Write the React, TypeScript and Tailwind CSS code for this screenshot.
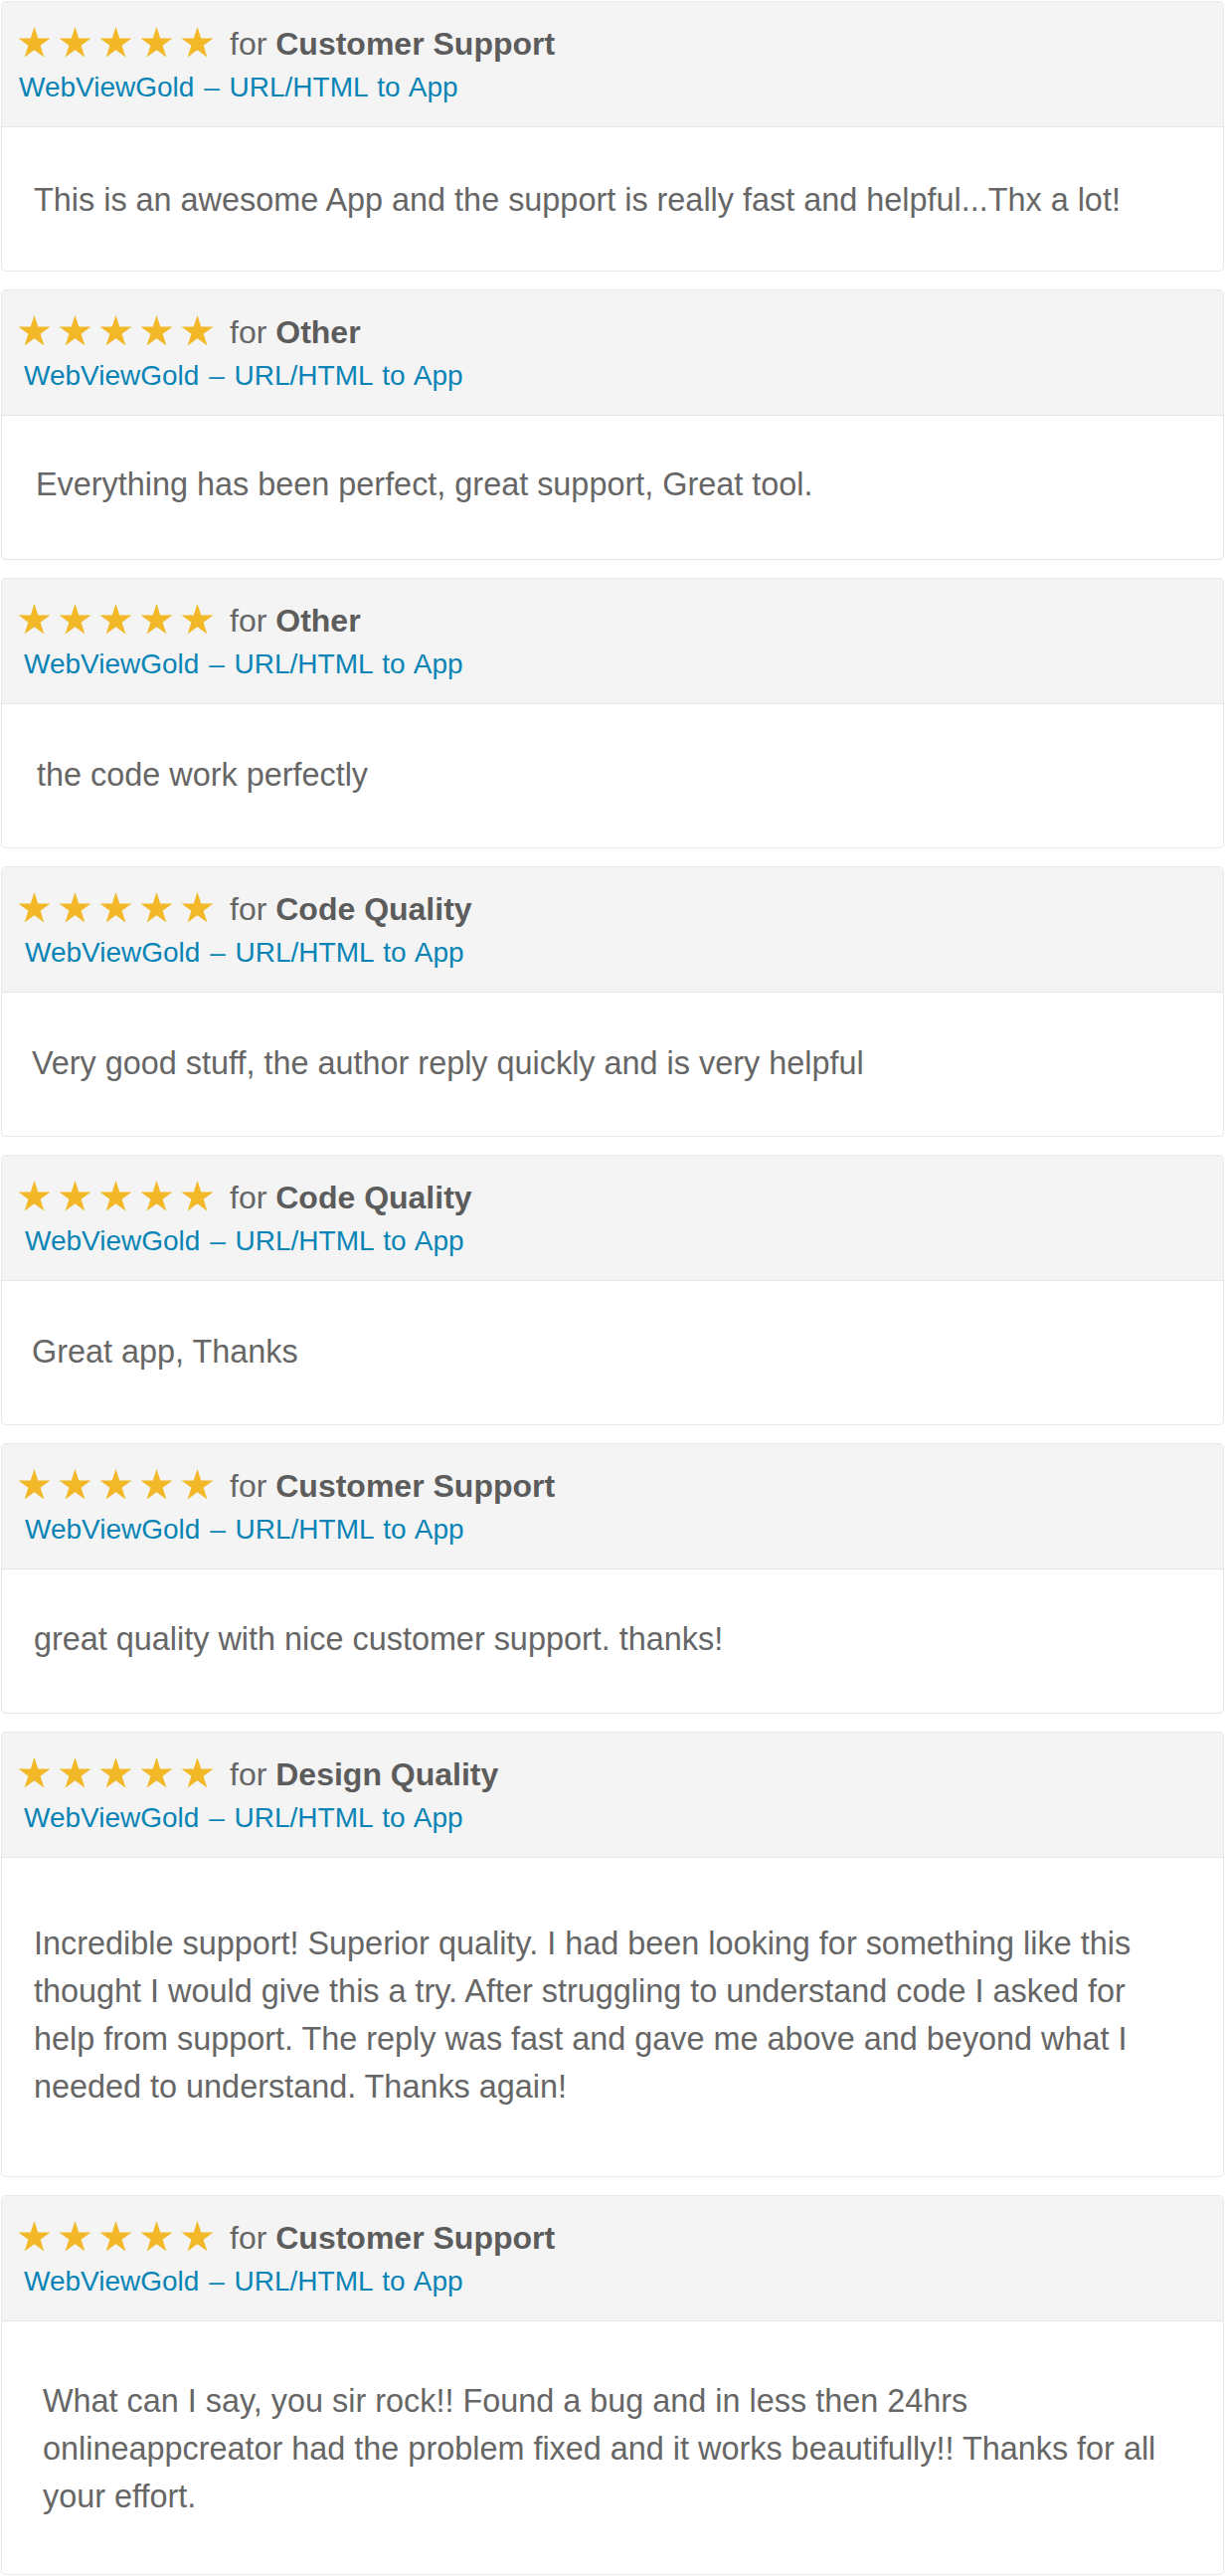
import React from 'react';

interface Review {
  category: string;
  text: string;
  linkClass: string;
  bodyClass: string;
}

const reviews: Review[] = [
  {
    category: 'Customer Support',
    text: 'This is an awesome App and the support is really fast and helpful...Thx a lot!',
    linkClass: 'ml-[1px]',
    bodyClass: 'pl-[32px] pt-[49px] pb-[47px]',
  },
  {
    category: 'Other',
    text: 'Everything has been perfect, great support, Great tool.',
    linkClass: 'ml-[6px]',
    bodyClass: 'pl-[34px] pt-[45px] pb-[51px]',
  },
  {
    category: 'Other',
    text: 'the code work perfectly',
    linkClass: 'ml-[6px]',
    bodyClass: 'pl-[35px] pt-[47px] pb-[49px]',
  },
  {
    category: 'Code Quality',
    text: 'Very good stuff, the author reply quickly and is very helpful',
    linkClass: 'ml-[7px]',
    bodyClass: 'pl-[30px] pt-[47px] pb-[49px]',
  },
  {
    category: 'Code Quality',
    text: 'Great app, Thanks',
    linkClass: 'ml-[7px]',
    bodyClass: 'pl-[30px] pt-[47px] pb-[49px]',
  },
  {
    category: 'Customer Support',
    text: 'great quality with nice customer support. thanks!',
    linkClass: 'ml-[7px]',
    bodyClass: 'pl-[32px] pt-[46px] pb-[50px]',
  },
  {
    category: 'Design Quality',
    text: 'Incredible support! Superior quality. I had been looking for something like this thought I would give this a try. After struggling to understand code I asked for help from support. The reply was fast and gave me above and beyond what I needed to understand. Thanks again!',
    linkClass: 'ml-[6px]',
    bodyClass: 'pl-[32px] pr-[50px] pt-[62px] pb-[66px]',
  },
  {
    category: 'Customer Support',
    text: 'What can I say, you sir rock!! Found a bug and in less then 24hrs onlineappcreator had the problem fixed and it works beautifully!! Thanks for all your effort.',
    linkClass: 'ml-[6px]',
    bodyClass: 'pl-[41px] pr-[50px] pt-[56px] pb-[54px]',
  },
];

function Star() {
  return (
    <svg width="33" height="31" viewBox="0 0 33 31" className="shrink-0">
      <polygon
        fill="#f2b827"
        points="16.5,0 20.27,11.61 32.48,11.61 22.61,18.78 26.38,30.39 16.5,23.22 6.62,30.39 10.39,18.78 0.52,11.61 12.73,11.61"
      />
    </svg>
  );
}

function ReviewCard({ review }: { review: Review }) {
  return (
    <div className="rounded-[5px] border border-[#e2e8ee] bg-white overflow-hidden">
      <div className="bg-[#f4f4f4] border-b border-[#e2e8ee] pl-[16px] pt-[22px] pb-[21px]">
        <div className="flex items-start">
          <div className="flex gap-[8px] mt-[3px]">
            <Star />
            <Star />
            <Star />
            <Star />
            <Star />
          </div>
          <div className="ml-[16px] text-[32px] leading-[40px] text-[#666]">
            for <span className="font-bold text-[#5c5c5c]">{review.category}</span>
          </div>
        </div>
        <a
          href="#"
          className={`block mt-[6px] text-[28px] leading-[36px] [word-spacing:2px] text-[#0a84b6] ${review.linkClass}`}
        >
          WebViewGold – URL/HTML to App
        </a>
      </div>
      <div className={`text-[32.4px] leading-[48px] text-[#666] ${review.bodyClass}`}>
        {review.text}
      </div>
    </div>
  );
}

export default function App() {
  return (
    <div className="bg-white px-[1px] pt-[1px] flex flex-col gap-[18px] font-['Liberation_Sans',Arial,sans-serif]">
      {reviews.map((r, i) => (
        <ReviewCard key={i} review={r} />
      ))}
    </div>
  );
}
